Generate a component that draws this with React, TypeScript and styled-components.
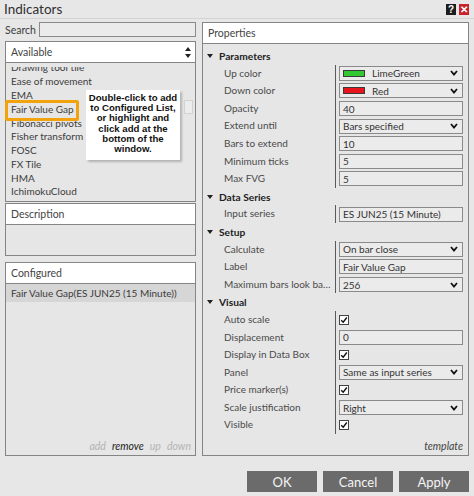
import React from "react";
import styled, { createGlobalStyle } from "styled-components";

const GlobalStyle = createGlobalStyle`
  html, body {
    margin: 0;
    padding: 0;
    background: #e7e7e7;
  }
  body {
    font-family: Lato, "Open Sans", sans-serif;
    color: #3c3c3c;
  }
  * {
    box-sizing: border-box;
  }
`;

const Window = styled.div`
  width: 474px;
  height: 496px;
  display: flex;
  flex-direction: column;
  background: #e7e7e7;
  overflow: hidden;
`;

const TitleBar = styled.div`
  height: 19px;
  display: flex;
  align-items: center;
  justify-content: space-between;
  padding: 0 5px 0 4px;
  font-size: 13.5px;
  color: #303030;
  border-bottom: 1px solid #d3d3d3;
`;

const TitleButtons = styled.div`
  display: flex;
  gap: 3px;
`;

const TitleButton = styled.div<{ $bg: string }>`
  width: 10px;
  height: 11px;
  background: ${(p) => p.$bg};
  color: #fff;
  font-family: "Liberation Sans", Arial, sans-serif;
  font-weight: 700;
  font-size: 10px;
  line-height: 11px;
  text-align: center;
`;

const Main = styled.div`
  height: 437px;
  display: flex;
  gap: 6px;
  padding: 3px 5px 0 5px;
`;

const LeftColumn = styled.div`
  width: 191px;
  display: flex;
  flex-direction: column;
`;

const SearchRow = styled.div`
  height: 15px;
  margin-bottom: 4px;
  display: flex;
  align-items: center;
  font-size: 10.5px;
`;

const SearchLabel = styled.span`
  width: 34px;
`;

const SearchInput = styled.div`
  flex: 1;
  height: 15px;
  border: 1px solid #8a8a8a;
  background: #ebebeb;
`;

const Box = styled.div<{ $h: number; $mt?: number }>`
  position: relative;
  height: ${(p) => p.$h}px;
  margin-top: ${(p) => p.$mt ?? 0}px;
  border: 1px solid #858585;
  background: #e6e6e6;
  display: flex;
  flex-direction: column;
`;

const BoxHeader = styled.div`
  height: 21px;
  flex-shrink: 0;
  display: flex;
  align-items: center;
  justify-content: space-between;
  padding: 0 4px 0 5px;
  background: #fff;
  border-bottom: 1px solid #858585;
  font-size: 10.5px;
  color: #444;
`;

const Spinner = styled.div`
  display: flex;
  flex-direction: column;
  gap: 3px;
`;

const ListViewport = styled.div`
  margin-top: 4px;
  flex: 1;
  overflow: hidden;
`;

const ListInner = styled.div`
  margin-top: -5.7px;
`;

const ListItem = styled.div`
  height: 13.8px;
  line-height: 13.8px;
  padding-left: 5px;
  font-size: 10px;
  color: #3c3c3c;
  white-space: nowrap;
`;

const Highlight = styled.div`
  position: absolute;
  left: -1px;
  top: 58px;
  width: 74px;
  height: 21px;
  border: 3px solid #f2a20c;
  border-radius: 2px;
`;

const ScrollThumb = styled.div`
  position: absolute;
  left: 178px;
  top: 58px;
  width: 9px;
  height: 14px;
  border: 1px solid #d2d2d2;
  background: #ececec;
`;

const Tooltip = styled.div`
  position: absolute;
  left: 80px;
  top: 48px;
  width: 94px;
  height: 70px;
  padding-top: 3px;
  background: #fff;
  box-shadow: 2px 2px 2px rgba(0, 0, 0, 0.22);
  font-family: "Liberation Sans", Arial, sans-serif;
  font-weight: 700;
  font-size: 9.6px;
  line-height: 10.2px;
  text-align: center;
  color: #111;
`;

const SelectedRow = styled.div`
  height: 18px;
  display: flex;
  align-items: center;
  padding-left: 5px;
  background: #d6d6d6;
  font-size: 10px;
  white-space: nowrap;
`;

const Filler = styled.div`
  flex: 1;
`;

const ActionBar = styled.div`
  display: flex;
  justify-content: flex-end;
  gap: 6px;
  padding: 0 4px 3px 0;
  font-size: 10.5px;
  font-style: italic;
`;

const Action = styled.span<{ $active?: boolean }>`
  color: ${(p) => (p.$active ? "#222" : "#b4b4b4")};
`;

const RightPanel = styled.div`
  flex: 1;
  border: 1px solid #858585;
  background: #e6e6e6;
  display: flex;
  flex-direction: column;
`;

const PropList = styled.div`
  padding-top: 3px;
`;

const CategoryRow = styled.div`
  height: 17.6px;
  display: flex;
  align-items: center;
  gap: 6px;
  padding-left: 4px;
  font-size: 10.2px;
  font-weight: 700;
  color: #222;
`;

const PropRow = styled.div`
  height: 17.6px;
  display: grid;
  grid-template-columns: 132px 1fr;
`;

const PropLabel = styled.div`
  padding: 0 3px 0 21px;
  font-size: 10px;
  line-height: 17.6px;
  color: #4a4a4a;
  white-space: nowrap;
  overflow: hidden;
  text-overflow: ellipsis;
`;

const PropValue = styled.div`
  display: flex;
  align-items: center;
  border-left: 1px solid #5a5a5a;
  padding: 0 5px 0 3px;
`;

const Field = styled.div`
  width: 100%;
  height: 15px;
  display: flex;
  align-items: center;
  padding: 0 4px 0 3px;
  border: 1px solid #8a8a8a;
  background: #ebebeb;
  font-size: 10px;
  color: #333;
  white-space: nowrap;
`;

const FieldText = styled.span`
  flex: 1;
`;

const Swatch = styled.span<{ $color: string }>`
  width: 22px;
  height: 7px;
  margin-right: 7px;
  background: ${(p) => p.$color};
  border: 1px solid #3a3a3a;
`;

const CheckBox = styled.div`
  width: 10px;
  height: 10px;
  border: 1px solid #444;
  background: #fff;
  display: flex;
  align-items: center;
  justify-content: center;
`;

const PanelFooter = styled.div`
  display: flex;
  justify-content: flex-end;
  padding: 0 5px 3px 0;
  font-size: 10.5px;
  font-style: italic;
  color: #444;
`;

const ButtonBar = styled.div`
  display: flex;
  justify-content: flex-end;
  gap: 6px;
  padding: 15px 5px 0 0;
`;

const Button = styled.button`
  width: 70px;
  height: 21px;
  border: none;
  background: #6b6b6b;
  color: #f4f4f4;
  font-family: Lato, "Open Sans", sans-serif;
  font-size: 13px;
  padding: 0;
`;

const Chevron = () => (
  <svg width="8" height="6" viewBox="0 0 8 6">
    <polyline points="1,1 4,4.5 7,1" fill="none" stroke="#111" strokeWidth="1.8" />
  </svg>
);

const Triangle = ({ up }: { up?: boolean }) => (
  <svg width="6" height="4" viewBox="0 0 6 4">
    <polygon points={up ? "0,4 6,4 3,0" : "0,0 6,0 3,4"} fill="#222" />
  </svg>
);

const Check = () => (
  <svg width="8" height="8" viewBox="0 0 8 8">
    <polyline points="1.2,4.2 3.2,6.2 6.8,1.5" fill="none" stroke="#111" strokeWidth="1.4" />
  </svg>
);

type Prop =
  | { label: string; kind: "text"; value: string }
  | { label: string; kind: "select"; value: string; swatch?: string }
  | { label: string; kind: "check" };

const groups: { name: string; props: Prop[] }[] = [
  {
    name: "Parameters",
    props: [
      { label: "Up color", kind: "select", value: "LimeGreen", swatch: "#32c832" },
      { label: "Down color", kind: "select", value: "Red", swatch: "#e8141b" },
      { label: "Opacity", kind: "text", value: "40" },
      { label: "Extend until", kind: "select", value: "Bars specified" },
      { label: "Bars to extend", kind: "text", value: "10" },
      { label: "Minimum ticks", kind: "text", value: "5" },
      { label: "Max FVG", kind: "text", value: "5" },
    ],
  },
  {
    name: "Data Series",
    props: [{ label: "Input series", kind: "text", value: "ES JUN25 (15 Minute)" }],
  },
  {
    name: "Setup",
    props: [
      { label: "Calculate", kind: "select", value: "On bar close" },
      { label: "Label", kind: "text", value: "Fair Value Gap" },
      { label: "Maximum bars look back", kind: "select", value: "256" },
    ],
  },
  {
    name: "Visual",
    props: [
      { label: "Auto scale", kind: "check" },
      { label: "Displacement", kind: "text", value: "0" },
      { label: "Display in Data Box", kind: "check" },
      { label: "Panel", kind: "select", value: "Same as input series" },
      { label: "Price marker(s)", kind: "check" },
      { label: "Scale justification", kind: "select", value: "Right" },
      { label: "Visible", kind: "check" },
    ],
  },
];

const available = [
  "Drawing tool tile",
  "Ease of movement",
  "EMA",
  "Fair Value Gap",
  "Fibonacci pivots",
  "Fisher transform",
  "FOSC",
  "FX Tile",
  "HMA",
  "IchimokuCloud",
];

function PropEditor({ p }: { p: Prop }) {
  if (p.kind === "check") {
    return (
      <CheckBox>
        <Check />
      </CheckBox>
    );
  }
  return (
    <Field>
      {p.kind === "select" && p.swatch && <Swatch $color={p.swatch} />}
      <FieldText>{p.value}</FieldText>
      {p.kind === "select" && <Chevron />}
    </Field>
  );
}

export default function App() {
  return (
    <Window>
      <GlobalStyle />
      <TitleBar>
        <span>Indicators</span>
        <TitleButtons>
          <TitleButton $bg="#1d1d1d">?</TitleButton>
          <TitleButton $bg="#c8232c">✕</TitleButton>
        </TitleButtons>
      </TitleBar>
      <Main>
        <LeftColumn>
          <SearchRow>
            <SearchLabel>Search</SearchLabel>
            <SearchInput />
          </SearchRow>
          <Box $h={161}>
            <BoxHeader>
              <span>Available</span>
              <Spinner>
                <Triangle up />
                <Triangle />
              </Spinner>
            </BoxHeader>
            <ListViewport>
              <ListInner>
                {available.map((a) => (
                  <ListItem key={a}>{a}</ListItem>
                ))}
              </ListInner>
            </ListViewport>
            <ScrollThumb />
            <Highlight />
            <Tooltip>
              Double-click to add
              <br />
              to Configured List,
              <br />
              or highlight and
              <br />
              click add at the
              <br />
              bottom of the
              <br />
              window.
            </Tooltip>
          </Box>
          <Box $h={53} $mt={1}>
            <BoxHeader>
              <span>Description</span>
            </BoxHeader>
          </Box>
          <Box $h={194} $mt={6}>
            <BoxHeader>
              <span>Configured</span>
            </BoxHeader>
            <SelectedRow>Fair Value Gap(ES JUN25 (15 Minute))</SelectedRow>
            <Filler />
            <ActionBar>
              <Action>add</Action>
              <Action $active>remove</Action>
              <Action>up</Action>
              <Action>down</Action>
            </ActionBar>
          </Box>
        </LeftColumn>
        <RightPanel>
          <BoxHeader>
            <span>Properties</span>
          </BoxHeader>
          <PropList>
            {groups.map((g) => (
              <React.Fragment key={g.name}>
                <CategoryRow>
                  <Triangle />
                  {g.name}
                </CategoryRow>
                {g.props.map((p) => (
                  <PropRow key={p.label}>
                    <PropLabel>{p.label}</PropLabel>
                    <PropValue>
                      <PropEditor p={p} />
                    </PropValue>
                  </PropRow>
                ))}
              </React.Fragment>
            ))}
          </PropList>
          <Filler />
          <PanelFooter>template</PanelFooter>
        </RightPanel>
      </Main>
      <ButtonBar>
        <Button>OK</Button>
        <Button>Cancel</Button>
        <Button>Apply</Button>
      </ButtonBar>
    </Window>
  );
}
